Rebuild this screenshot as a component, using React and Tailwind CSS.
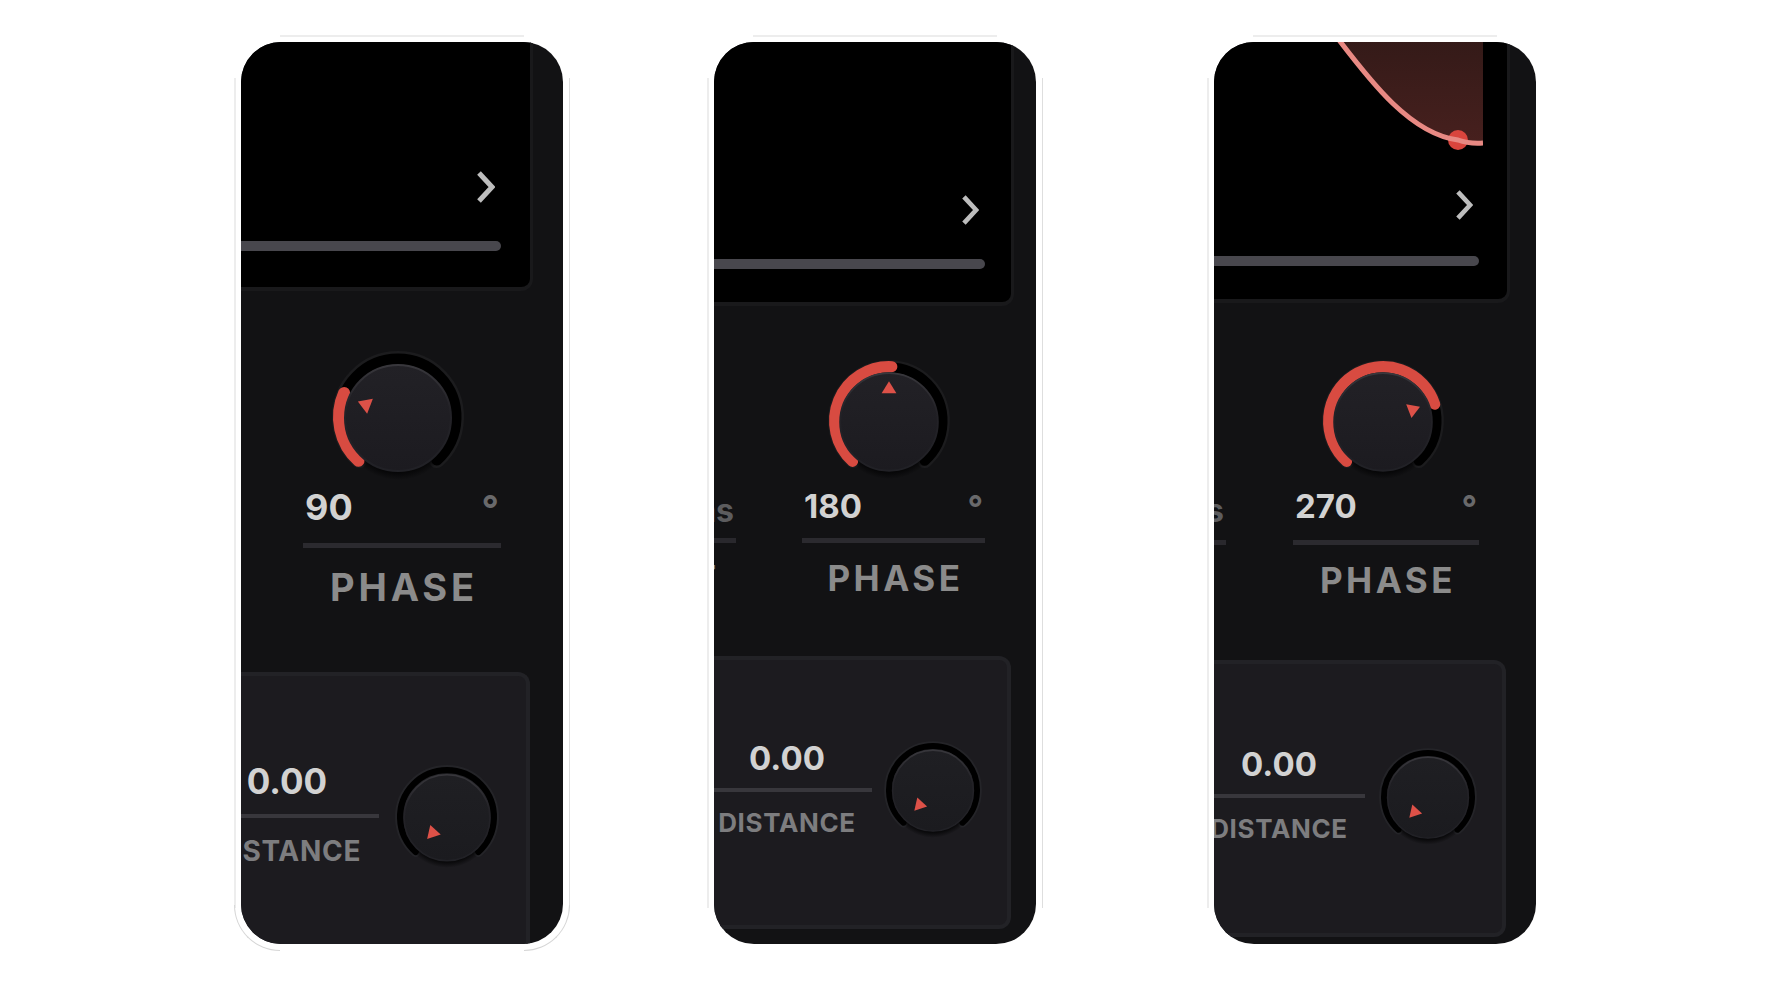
import React, { useState } from 'react';

const panels = [
  {
    id: 'a',
    phase: 90,
    card: '',
    screen: 'h-[249px] mr-[30px] pr-[29px] pb-9',
    chevron: 'h-8 w-[18px] mr-1.5 mb-[38px]',
    middle: 'mr-[62px]',
    column: 'w-[198px] pt-[62px]',
    knob: 'size-[128px] ml-[31px]',
    valueRow: 'mt-2 text-4xl',
    degree: 'text-[38px]',
    line: 'mt-[18px]',
    title: 'mt-[21px] text-[38px]',
    lower: 'mt-[67px] h-[272px] mr-[33px] pt-[87px] pr-[29px] gap-[18px]',
    lowerColumn: 'w-[184px]',
    lowerValue: 'text-[35px]',
    lowerLine: 'mt-[15px]',
    lowerTitle: 'mt-[18px] text-[28px]',
    smallKnob: 'size-[100px] mt-1',
  },
  {
    id: 'b',
    phase: 180,
    card: 'ml-[151px]',
    screen: 'h-[264px] mr-[22px] pr-[26px] pb-[33px]',
    chevron: 'h-[30px] w-[17px] mr-1.5 mb-[34px]',
    middle: 'mr-[51px] gap-[66px]',
    column: 'w-[183px] pt-14',
    knob: 'size-[118px] ml-7',
    valueRow: 'mt-2 text-[33px]',
    degree: 'text-[34px]',
    line: 'mt-3.5',
    title: 'mt-[17px] text-[35px]',
    neighbour: { unit: 'ms', title: 'T' },
    lower: 'mt-[60px] h-[273px] mr-[25px] pt-20 pr-[27px] gap-[14px] rounded-br-xl border-b-4',
    lowerColumn: 'w-[170px]',
    lowerValue: 'text-[33px]',
    lowerLine: 'mt-3',
    lowerTitle: 'mt-4 text-[26px]',
    smallKnob: 'size-[94px] mt-[3px]',
  },
  {
    id: 'c',
    phase: 270,
    card: 'ml-[178px]',
    screen: 'h-[261px] mr-[26px] pr-[28px] pb-[33px]',
    chevron: 'h-[30px] w-[17px] mr-1.5 mb-9',
    middle: 'mr-[57px] gap-[67px]',
    column: 'w-[186px] pt-[59px]',
    knob: 'size-[118px] ml-[31px]',
    valueRow: 'mt-2 text-[33px]',
    degree: 'text-[34px]',
    line: 'mt-4',
    title: 'mt-[17px] text-[35px]',
    neighbour: { unit: 's', title: '' },
    wave: true,
    lower: 'mt-[62px] h-[277px] mr-[30px] pt-[82px] pr-[27px] gap-[16px] rounded-br-xl border-b-4',
    lowerColumn: 'w-[172px]',
    lowerValue: 'text-[33px]',
    lowerLine: 'mt-3',
    lowerTitle: 'mt-4 text-[26px]',
    smallKnob: 'size-[94px] mt-1',
  },
];

const SWEEP = 138;

const point = (angle, r) => {
  const rad = (angle * Math.PI) / 180;
  return `${(r * Math.sin(rad)).toFixed(2)} ${(-r * Math.cos(rad)).toFixed(2)}`;
};

const arc = (from, to, r) =>
  `M${point(from, r)}A${r} ${r} 0 ${to - from > 180 ? 1 : 0} 1 ${point(to, r)}`;

const Knob = ({ id, label, value, min, max, onChange, className, small }) => {
  const angle = -SWEEP + ((value - min) / (max - min)) * SWEEP * 2;
  const track = small ? 60 : 58;
  const thick = small ? 8 : 11;
  const body = small ? 56 : 54;
  const tip = small ? 28 : 36;

  return (
    <div className={`relative shrink-0 ${className}`}>
      <svg viewBox="-64 -64 128 128" className="block size-full overflow-visible" aria-hidden="true">
        <defs>
          <linearGradient id={`${id}-body`} x1="0" y1="0" x2="0" y2="1">
            <stop offset="0" stopColor={small ? '#1f1f23' : '#222126'} />
            <stop offset="1" stopColor={small ? '#1b1b1f' : '#1c1b20'} />
          </linearGradient>
          <linearGradient id={`${id}-rim`} x1="0" y1="0" x2="0" y2="1">
            <stop offset="0" stopColor="#38373c" />
            <stop offset="0.4" stopColor="#232227" />
            <stop offset="1" stopColor="#212126" />
          </linearGradient>
          <radialGradient id={`${id}-shade`}>
            <stop offset="0.85" stopColor="#050506" />
            <stop offset="1" stopColor="#050506" stopOpacity="0" />
          </radialGradient>
        </defs>
        <path d={arc(-SWEEP, SWEEP, track)} fill="none" stroke={small ? '#242428' : '#1c1c1e'} strokeWidth={thick + 5} strokeLinecap="round" />
        <circle cx="0" cy="6" r={body + 3} fill={`url(#${id}-shade)`} />
        <path d={arc(-SWEEP, SWEEP, track)} fill="none" stroke="#000" strokeWidth={thick} strokeLinecap="round" />
        {value > min && (
          <path d={arc(-SWEEP, Math.min(angle + 3, SWEEP), track + 1)} fill="none" stroke="#d84b41" strokeWidth={thick + 1} strokeLinecap="round" />
        )}
        <circle cy="1" r={body - 1} fill={`url(#${id}-body)`} stroke={`url(#${id}-rim)`} strokeWidth="2" />
        <g transform={`rotate(${angle.toFixed(2)})`}>
          <path
            d={small ? `M0 ${-tip - 10}L9 ${-tip + 6}H-9Z` : `M0 ${-tip - 7}L8 ${-tip + 6}H-8Z`}
            fill="#dd5148"
          />
        </g>
      </svg>
      <input
        id={id}
        type="range"
        aria-label={label}
        min={min}
        max={max}
        value={value}
        onChange={(e) => onChange(Number(e.target.value))}
        className="absolute inset-0 size-full cursor-pointer opacity-0"
      />
    </div>
  );
};

const Chevron = ({ className }) => (
  <button type="button" aria-label="Next" className={`shrink-0 ${className}`}>
    <svg viewBox="0 0 18 32" className="block size-full" fill="none" stroke="#bdbdbd" strokeWidth="5">
      <path d="M2 2L15 16L2 30" />
    </svg>
  </button>
);

const Wave = () => (
  <svg viewBox="0 0 146 112" className="-mr-1 block h-[112px] w-[146px] shrink-0" aria-hidden="true">
    <defs>
      <linearGradient id="wave-fill" x1="0" y1="0" x2="0" y2="1">
        <stop offset="0" stopColor="#341a18" />
        <stop offset="1" stopColor="#47201e" />
      </linearGradient>
    </defs>
    <path d="M2 -2C34 40 74 92 121 98Q132 102 146 101V-2Z" fill="url(#wave-fill)" />
    <circle cx="121" cy="98" r="10" fill="#d9453d" />
    <path d="M2 -2C34 40 74 92 121 98Q132 102 146 101" fill="none" stroke="#e88983" strokeWidth="5" />
  </svg>
);

// Hairlines that run just outside each card
const Outline = ({ id }) => (
  <div aria-hidden="true" className="pointer-events-none absolute -inset-[7px]">
    <div className="absolute inset-x-[46px] top-0 h-0.5 bg-[#ededed]" />
    <div className="absolute inset-y-[43px] left-0 w-0.5 bg-[#ededed]" />
    {id !== 'c' && <div className="absolute inset-y-[43px] right-0 w-px bg-[#dedede]" />}
    {id === 'a' && (
      <>
        <div className="absolute bottom-0 left-0 size-[46px] rounded-bl-[46px] border-b border-l border-[#d6d6d6]" />
        <div className="absolute right-0 bottom-0 size-[46px] rounded-br-[46px] border-r border-b border-[#d6d6d6]" />
      </>
    )}
  </div>
);

const PhaseCard = ({ panel }) => {
  const [phase, setPhase] = useState(panel.phase);
  const [distance, setDistance] = useState(0);
  const { id, neighbour } = panel;

  return (
    <section className={`relative min-w-0 flex-1 ${panel.card}`}>
      <Outline id={id} />
      <div className="relative h-[902px] overflow-hidden rounded-[40px] bg-[#121214]">
        <div className={`flex flex-col items-end rounded-br-xl border-r-3 border-b-4 border-[#19191b] bg-black ${panel.screen}`}>
          {panel.wave && <Wave />}
          <Chevron className={`mt-auto ${panel.chevron}`} />
          <div className="h-2.5 w-full shrink-0 rounded-r-full bg-[#48474d]" />
        </div>

        <div className={`flex justify-end ${panel.middle}`}>
          {neighbour && (
            <div className="flex min-w-0 flex-1 flex-col items-end justify-end text-[#5c5c5e]">
              <span className="h-9 pr-0.5 text-[32px] leading-[46px] font-bold">{neighbour.unit}</span>
              <div className={`h-[5px] w-full bg-[#29282d] ${panel.line}`} />
              <span className={`h-9 pr-5 leading-9 font-bold text-[#8b8b8b] ${panel.title}`}>{neighbour.title}</span>
            </div>
          )}
          <div className={`shrink-0 ${panel.column}`}>
            <Knob
              id={`phase-${id}`}
              label="Phase"
              value={phase}
              min={0}
              max={360}
              onChange={setPhase}
              className={panel.knob}
            />
            <div className={`flex h-9 justify-between pr-0.5 pl-0.5 leading-9 font-bold text-[#d2d2d2] ${panel.valueRow}`}>
              <output htmlFor={`phase-${id}`}>{phase}</output>
              <span className={`leading-10 text-[#69696b] ${panel.degree}`}>°</span>
            </div>
            <div className={`h-[5px] bg-[#2b2a2f] ${panel.line}`} />
            <label
              htmlFor={`phase-${id}`}
              className={`block pl-1 text-center leading-9 font-bold tracking-widest text-[#8b8b8b] ${panel.title}`}
            >
              PHASE
            </label>
          </div>
        </div>

        <div className={`flex items-start justify-end rounded-tr-xl border-t-4 border-r-4 border-[#222226] bg-[#1c1b1f] ${panel.lower}`}>
          <div className={`shrink-0 text-center ${panel.lowerColumn}`}>
            <output htmlFor={`distance-${id}`} className={`block leading-9 font-bold text-[#d2d2d2] ${panel.lowerValue}`}>
              {distance.toFixed(2)}
            </output>
            <div className={`h-1 bg-[#38373c] ${panel.lowerLine}`} />
            <label
              htmlFor={`distance-${id}`}
              className={`block leading-[30px] font-bold tracking-wide text-[#7d7d7f] ${panel.lowerTitle}`}
            >
              DISTANCE
            </label>
          </div>
          <Knob
            id={`distance-${id}`}
            label="Distance"
            value={distance}
            min={0}
            max={100}
            onChange={setDistance}
            className={panel.smallKnob}
            small
          />
        </div>
      </div>
    </section>
  );
};

export default function App() {
  return (
    <main className="flex min-h-screen items-start bg-white pt-[42px] pr-60 pl-[241px] font-['Inter',sans-serif]">
      {panels.map((panel) => (
        <PhaseCard key={panel.id} panel={panel} />
      ))}
    </main>
  );
}
